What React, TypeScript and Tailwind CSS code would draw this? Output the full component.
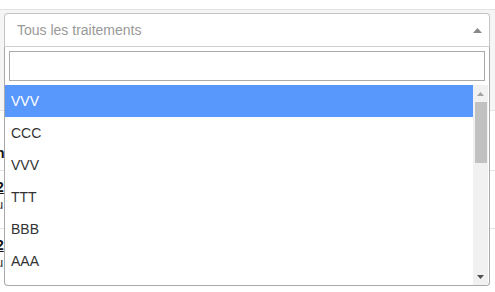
import React from 'react'

const options = ['VVV', 'CCC', 'VVV', 'TTT', 'BBB', 'AAA', 'MMM']

export default function App() {
    return (
        <div className="relative w-[495px] h-[292px] overflow-hidden bg-white" style={{ fontFamily: '"Liberation Sans", Arial, sans-serif' }}>
            {/* page behind the dropdown */}
            <div className="h-[9px] bg-white" />
            <div className="h-[101px] border-t border-[#e3e3e3] bg-[#f5f5f5]" />
            <div className="relative h-[60px] border-t border-[#e3e3e3]">
                <span className="absolute left-[-4px] top-[32px] text-[14px] font-bold text-[#111]">n</span>
            </div>
            <div className="relative h-[58px] border-t border-[#e3e3e3]">
                <span className="absolute left-[-4px] top-[6px] text-[14px] font-bold text-[#111] underline">2</span>
                <span className="absolute left-[-4px] top-[24px] text-[13px] text-[#333]">u</span>
            </div>
            <div className="relative h-[60px] border-t border-[#e3e3e3]">
                <span className="absolute left-[-4px] top-[6px] text-[14px] font-bold text-[#111] underline">2</span>
                <span className="absolute left-[-4px] top-[24px] text-[13px] text-[#333]">u</span>
            </div>

            {/* open select */}
            <div className="absolute left-[4px] top-[13px] w-[486px]">
                <div className="flex h-[34px] items-center justify-between rounded-t-[4px] border border-[#c4c4c4] border-b-[#cfcfcf] bg-white pl-[12px] pr-[7px]">
                    <span className="text-[14px] text-[#999]">Tous les traitements</span>
                    <svg width="9" height="5" viewBox="0 0 9 5"><path d="M0 5 L4.5 0 L9 5 Z" fill="#888" /></svg>
                </div>
                <div className="rounded-b-[4px] border border-t-0 border-[#aaa] bg-white">
                    <div className="p-[4px]">
                        <div className="h-[30px] border border-[#aaa] bg-white" />
                    </div>
                    <div className="flex h-[200px]">
                        <div className="flex-1 overflow-hidden">
                            {options.map((o, i) => (
                                <div
                                    key={i}
                                    className={`flex h-[32px] items-center pl-[6px] text-[14px] ${i === 0 ? 'bg-[#5897fb] text-white' : 'text-[#333]'}`}
                                >
                                    {o}
                                </div>
                            ))}
                        </div>
                        <div className="flex w-[15px] flex-col items-center bg-[#f1f1f1] mr-[1px]">
                            <div className="flex h-[17px] items-center justify-center">
                                <svg width="7" height="4" viewBox="0 0 7 4"><path d="M0 4 L3.5 0 L7 4 Z" fill="#a3a3a3" /></svg>
                            </div>
                            <div className="h-[61px] w-[12px] bg-[#c1c1c1]" />
                            <div className="flex-1" />
                            <div className="flex h-[17px] items-center justify-center">
                                <svg width="7" height="4" viewBox="0 0 7 4"><path d="M0 0 L3.5 4 L7 0 Z" fill="#505050" /></svg>
                            </div>
                        </div>
                    </div>
                </div>
            </div>
        </div>
    )
}
